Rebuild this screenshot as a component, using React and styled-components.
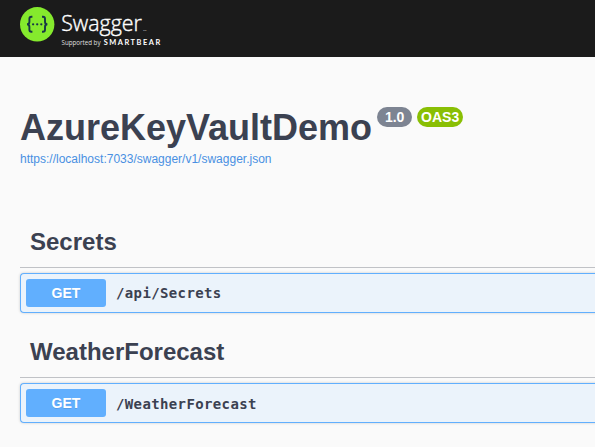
import React from 'react';
import styled, { createGlobalStyle } from 'styled-components';

const GlobalStyle = createGlobalStyle`
	* {
		box-sizing: border-box;
	}
	body {
		margin: 0;
		background: #fafafa;
		color: #3b4151;
		font-family: "Liberation Sans", Arial, sans-serif;
		overflow: hidden;
	}
`;

const Page = styled.div`
	height: 447px;
	overflow: hidden;
`;

const Topbar = styled.header`
	display: flex;
	height: 57px;
	padding-left: 20px;
	background: #1b1b1b;
`;

const Content = styled.main`
	padding-left: 20px;
`;

const Info = styled.section`
	height: 163px;
	padding-top: 49px;
`;

const TitleRow = styled.div`
	display: flex;
	align-items: flex-start;
`;

const Title = styled.h1`
	margin: 0;
	padding-top: 1px;
	font-size: 36px;
	line-height: 42px;
`;

const Badge = styled.span`
	height: 20px;
	width: ${(props) => props.$width};
	margin: 1px 0 0 5px;
	border-radius: 10px;
	background: ${(props) => props.$color};
	color: white;
	font-size: 14px;
	font-weight: 700;
	line-height: 20px;
	text-align: center;
`;

const SpecLink = styled.a`
	display: block;
	margin-top: 2px;
	color: #4990e2;
	font-size: 12px;
	line-height: 16px;
	text-decoration: none;
`;

const Tag = styled.section`
	height: 110px;
`;

const TagTitle = styled.h3`
	height: 48px;
	margin: 0;
	padding: 7px 10px 0;
	border-bottom: 1px solid rgba(59, 65, 81, 0.3);
	font-size: 24px;
	line-height: 30px;
`;

const Operation = styled.div`
	display: flex;
	align-items: center;
	height: 40px;
	margin: 5px -20px 0 0;
	padding: 5px;
	border: 1px solid #61affe;
	border-right: 0;
	border-radius: 4px 0 0 4px;
	background: #ebf3fb;
	box-shadow: 0 0 3px rgba(0, 0, 0, 0.19);
`;

const Method = styled.span`
	width: 80px;
	height: 28px;
	border-radius: 3px;
	background: #61affe;
	color: white;
	font-size: 14px;
	font-weight: 700;
	line-height: 28px;
	text-align: center;
	text-shadow: 0 1px 0 rgba(0, 0, 0, 0.1);
`;

const Path = styled.span`
	padding: ${(props) => props.$offset}px 0 0 10px;
	font-family: "DejaVu Sans Mono", monospace;
	font-size: 14px;
	font-weight: 700;
	letter-spacing: 0.37px;
	line-height: 20px;
`;

const Logo = () => (
	<svg width="145" height="56" viewBox="20 0 145 56">
		<circle cx="37.2" cy="24.3" r="17.2" fill="#85ea2d" />
		<g fill="none" stroke="#173647" strokeWidth="1.9">
			<path d="M32.4 16.8h-1q-2 0-2 2v2.9q0 2.6-2.4 2.6q2.4 0 2.4 2.6v2.9q0 2 2 2h1" />
			<path d="M42 16.8h1q2 0 2 2v2.9q0 2.6 2.4 2.6q-2.4 0-2.4 2.6v2.9q0 2-2 2h-1" />
		</g>
		<g fill="#173647">
			<circle cx="33.1" cy="24.3" r="1.15" />
			<circle cx="37.2" cy="24.3" r="1.15" />
			<circle cx="41.3" cy="24.3" r="1.15" />
		</g>
		<g fill="white" fontFamily="'Open Sans', sans-serif">
			<text x="61.2" y="31.2" fontSize="22.5" fontWeight="300" stroke="white" strokeWidth="0.4" textLength="80.6" lengthAdjust="spacingAndGlyphs">Swagger</text>
			<text x="143.3" y="31" fontSize="2">TM</text>
			<text x="61.5" y="45.3" fontSize="6.4" textLength="39" lengthAdjust="spacingAndGlyphs" opacity="0.85">Supported by</text>
			<text x="103.7" y="45.2" fontSize="7.4" fontWeight="700" fontFamily="Lato, sans-serif" textLength="56.5">SMARTBEAR</text>
		</g>
	</svg>
);

const tags = [
	{ name: 'Secrets', path: '/api/Secrets', offset: 0 },
	{ name: 'WeatherForecast', path: '/WeatherForecast', offset: 1 }
];

const App = () => (
	<Page>
		<GlobalStyle />
		<Topbar>
			<Logo />
		</Topbar>
		<Content>
			<Info>
				<TitleRow>
					<Title>AzureKeyVaultDemo</Title>
					<Badge $color="#7d8492" $width="35px">1.0</Badge>
					<Badge $color="#89bf04" $width="46px">OAS3</Badge>
				</TitleRow>
				<SpecLink href="#">https://localhost:7033/swagger/v1/swagger.json</SpecLink>
			</Info>
			{tags.map((tag) => (
				<Tag key={tag.name}>
					<TagTitle>{tag.name}</TagTitle>
					<Operation>
						<Method>GET</Method>
						<Path $offset={tag.offset}>{tag.path}</Path>
					</Operation>
				</Tag>
			))}
		</Content>
	</Page>
);

export default App;
